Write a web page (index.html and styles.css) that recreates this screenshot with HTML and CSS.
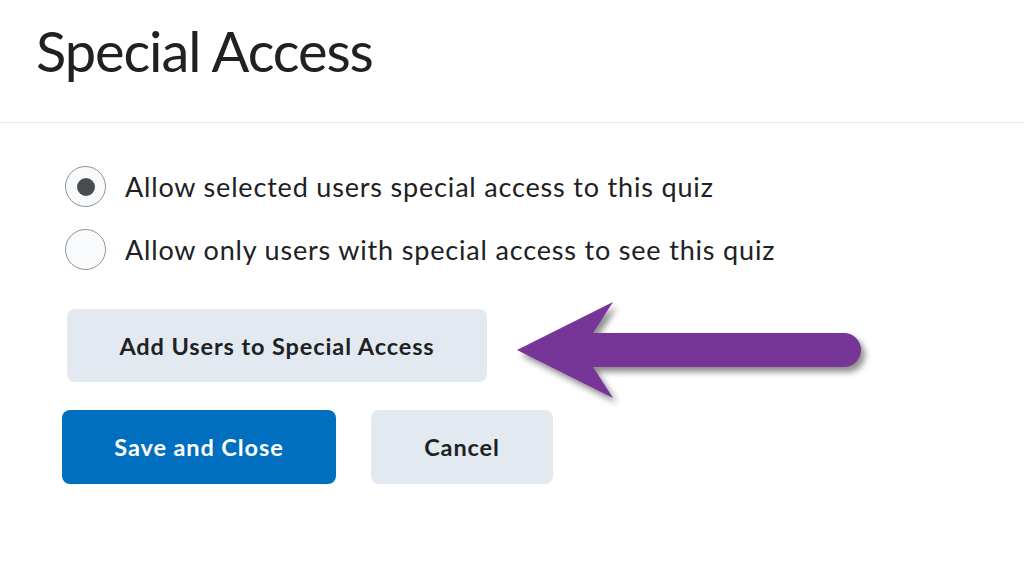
FILE: index.html
```html
<!DOCTYPE html>
<html lang="en">
<head>
<meta charset="utf-8">
<title>Special Access</title>
<link rel="stylesheet" href="styles.css">
</head>
<body>
<div class="page">
  <header class="header">
    <h1 class="title">Special Access</h1>
  </header>
  <main class="content">
    <div class="radios">
      <label class="radio-row">
        <span class="radio checked"><span class="dot"></span></span>
        <span class="radio-label">Allow selected users special access to this quiz</span>
      </label>
      <label class="radio-row">
        <span class="radio"></span>
        <span class="radio-label">Allow only users with special access to see this quiz</span>
      </label>
    </div>
    <button class="btn btn-add">Add Users to Special Access</button>
    <div class="actions">
      <button class="btn btn-primary">Save and Close</button>
      <button class="btn btn-cancel">Cancel</button>
    </div>
  </main>
  <svg class="arrow" width="380" height="130" viewBox="0 0 380 130" aria-hidden="true">
    <path d="M12 60 L108 12 L88 43 H339 A17 17 0 0 1 339 77 H88 L108 108 Z" fill="#773597"/>
  </svg>
</div>
</body>
</html>
```

FILE: styles.css
```css
html, body {
  margin: 0;
  padding: 0;
  background: #ffffff;
}

body {
  font-family: Lato, "Noto Sans", sans-serif;
  color: #202122;
}

.page {
  position: relative;
  width: 1024px;
  height: 565px;
  overflow: hidden;
}

.header {
  padding: 17px 0 38px 36px;
  border-bottom: 1px solid #e6eaf0;
}

.title {
  margin: 0;
  font-size: 56px;
  line-height: 67px;
  font-weight: 400;
  letter-spacing: -1.1px;
  color: #202122;
}

.content {
  padding: 43px 0 0 65px;
}

.radios {
  display: flex;
  flex-direction: column;
  gap: 22px;
}

.radio-row {
  display: flex;
  align-items: center;
  gap: 19px;
  height: 41px;
}

.radio {
  box-sizing: border-box;
  width: 41px;
  height: 41px;
  border-radius: 50%;
  border: 1.5px solid #8e9194;
  background: #f9fafc;
  display: flex;
  align-items: center;
  justify-content: center;
  flex: none;
}

.dot {
  width: 18px;
  height: 18px;
  border-radius: 50%;
  background: #494c4e;
}

.radio-label {
  font-size: 27px;
  line-height: 41px;
  letter-spacing: 0.82px;
  color: #202122;
}

.btn {
  font-family: Lato, "Noto Sans", sans-serif;
  font-weight: 700;
  font-size: 23.5px;
  letter-spacing: 0.9px;
  border: none;
  border-radius: 8px;
  padding: 0;
  color: #202122;
  background: #e3e9f1;
}

.btn-add {
  display: block;
  margin: 39px 0 0 2px;
  width: 420px;
  height: 73px;
}

.actions {
  display: flex;
  gap: 35px;
  margin: 28px 0 0 -3px;
}

.btn-primary {
  width: 274px;
  height: 74px;
  background: #006fbf;
  color: #ffffff;
}

.btn-cancel {
  width: 182px;
  height: 74px;
}

.arrow {
  position: absolute;
  left: 505px;
  top: 290px;
  filter: drop-shadow(4px 5px 3px rgba(0, 0, 0, 0.45));
}
```
